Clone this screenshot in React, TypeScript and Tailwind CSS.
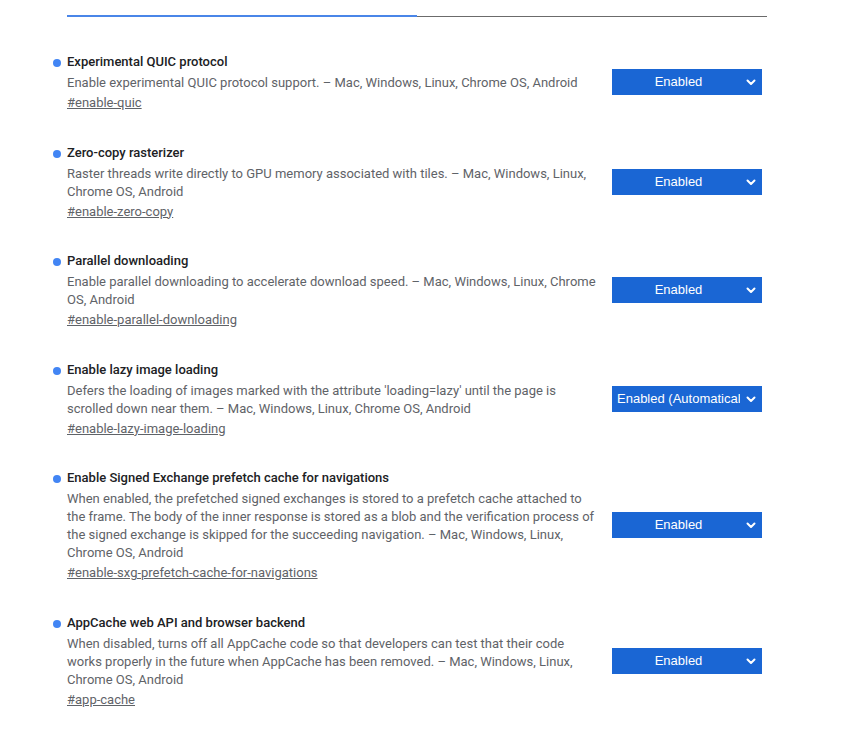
import React from "react";

type Flag = { title: string; lines: string[]; link: string; value: string };

const flags: Flag[] = [
  {
    title: "Experimental QUIC protocol",
    lines: ["Enable experimental QUIC protocol support. – Mac, Windows, Linux, Chrome OS, Android"],
    link: "#enable-quic",
    value: "Enabled",
  },
  {
    title: "Zero-copy rasterizer",
    lines: [
      "Raster threads write directly to GPU memory associated with tiles. – Mac, Windows, Linux,",
      "Chrome OS, Android",
    ],
    link: "#enable-zero-copy",
    value: "Enabled",
  },
  {
    title: "Parallel downloading",
    lines: [
      "Enable parallel downloading to accelerate download speed. – Mac, Windows, Linux, Chrome",
      "OS, Android",
    ],
    link: "#enable-parallel-downloading",
    value: "Enabled",
  },
  {
    title: "Enable lazy image loading",
    lines: [
      "Defers the loading of images marked with the attribute 'loading=lazy' until the page is",
      "scrolled down near them. – Mac, Windows, Linux, Chrome OS, Android",
    ],
    link: "#enable-lazy-image-loading",
    value: "Enabled (Automatically)",
  },
  {
    title: "Enable Signed Exchange prefetch cache for navigations",
    lines: [
      "When enabled, the prefetched signed exchanges is stored to a prefetch cache attached to",
      "the frame. The body of the inner response is stored as a blob and the verification process of",
      "the signed exchange is skipped for the succeeding navigation. – Mac, Windows, Linux,",
      "Chrome OS, Android",
    ],
    link: "#enable-sxg-prefetch-cache-for-navigations",
    value: "Enabled",
  },
  {
    title: "AppCache web API and browser backend",
    lines: [
      "When disabled, turns off all AppCache code so that developers can test that their code",
      "works properly in the future when AppCache has been removed. – Mac, Windows, Linux,",
      "Chrome OS, Android",
    ],
    link: "#app-cache",
    value: "Enabled",
  },
];

function Select({ value }: { value: string }) {
  return (
    <div
      className="relative flex h-[26px] w-[150px] shrink-0 items-center overflow-hidden bg-[#1a66d4] pl-[5px] pr-[22px] text-[13px] text-white"
      style={{ fontFamily: '"Liberation Sans", Arial, sans-serif' }}
    >
      <span className="block w-full overflow-hidden whitespace-nowrap text-center">{value}</span>
      <svg
        className="absolute right-[6px] top-[10px]"
        width="10"
        height="7"
        viewBox="0 0 10 7"
        fill="none"
      >
        <path d="M1.5 1.5 L5 5 L8.5 1.5" stroke="white" strokeWidth="2" strokeLinecap="round" strokeLinejoin="round" />
      </svg>
    </div>
  );
}

export default function App() {
  return (
    <div
      className="min-h-[729px] w-[854px] bg-white"
      style={{ fontFamily: 'Roboto, "Noto Sans", sans-serif' }}
    >
      <div className="pl-[67px] pt-[15px]">
        <div className="flex w-[700px] items-end">
          <div className="h-[2px] w-[350px] bg-[#4a86e8]" />
          <div className="h-[1px] w-[350px] bg-[#6b6b6b]" />
        </div>
      </div>
      <div className="flex flex-col gap-[30.5px] pl-[53px] pt-[35px]">
        {flags.map((f) => (
          <div key={f.link} className="flex items-center">
            <div className="flex w-[559px] shrink-0">
              <div className="mr-[6px] mt-[7px] h-[8px] w-[8px] shrink-0 rounded-full bg-[#4285f4]" />
              <div className="flex flex-col">
                <div className="mb-[2px] whitespace-nowrap text-[13px] font-medium leading-[20px] text-[#202124]">
                  {f.title}
                </div>
                {f.lines.map((l, i) => (
                  <div key={i} className="whitespace-nowrap text-[13px] leading-[18px] text-[#5f6368]">
                    {l}
                  </div>
                ))}
                <div className="mt-[2px] text-[13px] leading-[18px] text-[#5f6368]">
                  <span className="underline">{f.link}</span>
                </div>
              </div>
            </div>
            <Select value={f.value} />
          </div>
        ))}
      </div>
    </div>
  );
}
